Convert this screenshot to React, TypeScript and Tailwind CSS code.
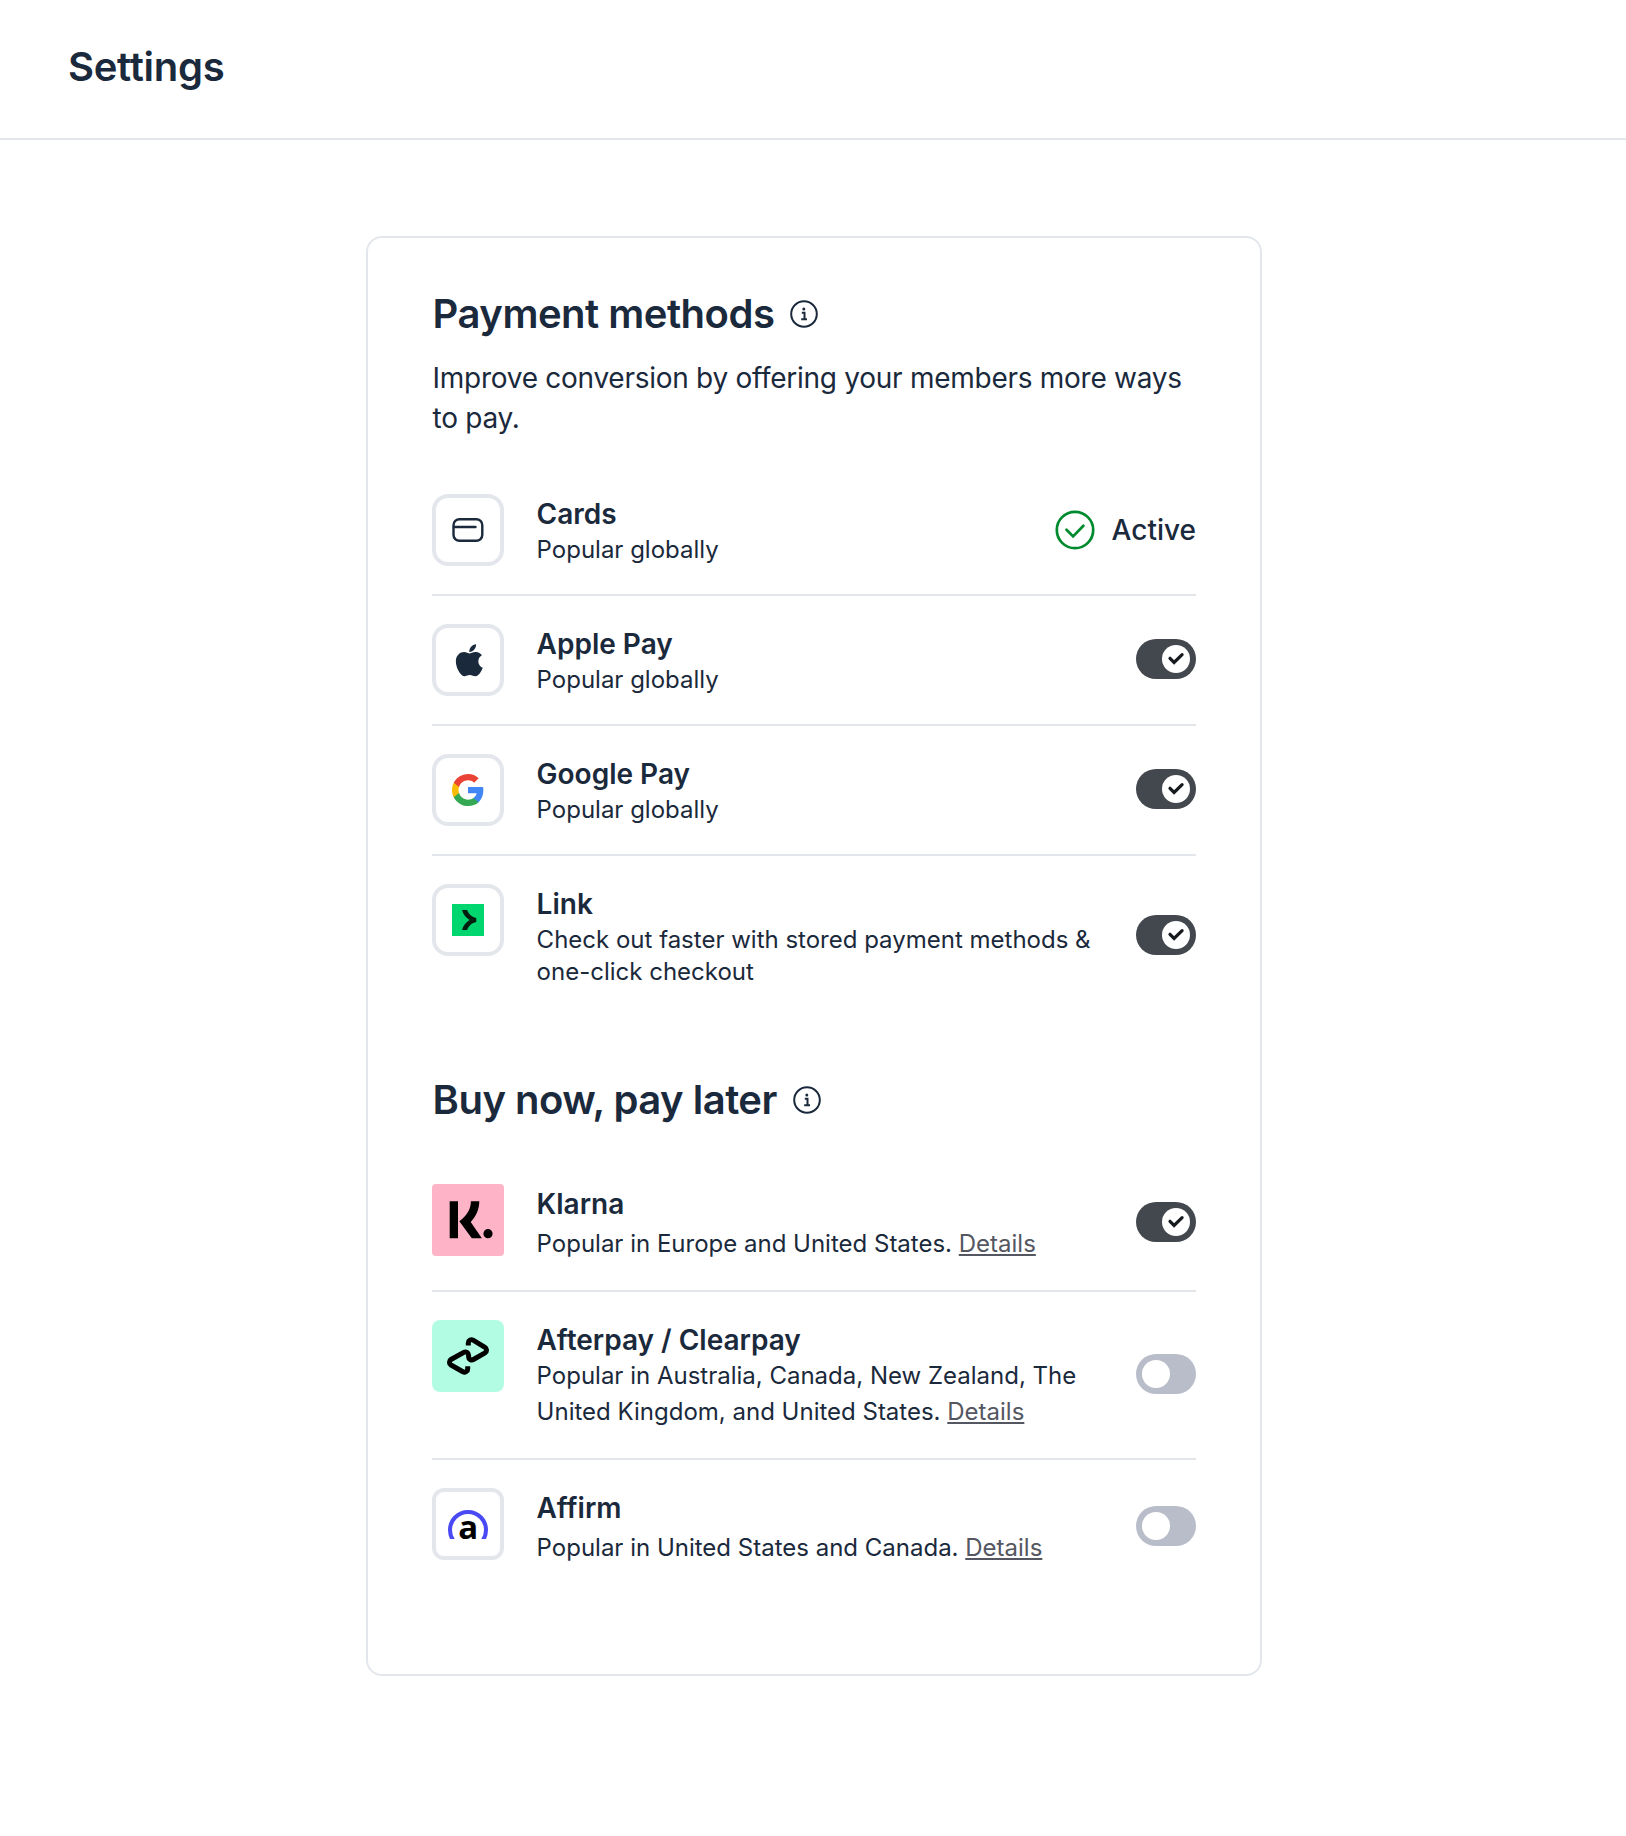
import { clsx } from "clsx";
import { ReactNode, useState } from "react";
import { FaApple } from "react-icons/fa";

type MethodRowProps = {
  icon: ReactNode;
  title: string;
  description: string;
  details?: boolean;
  enabled?: boolean;
  locked?: boolean;
};

function InfoIcon() {
  return (
    <svg viewBox="0 0 28 28" fill="none" stroke="currentColor" strokeWidth="2" className="size-7">
      <circle cx="14" cy="14" r="12.8" />
      <circle cx="13.8" cy="9" r="1.5" fill="currentColor" stroke="none" />
      <path d="M11.8 12.7h2.7v6.6M11.2 19.2h5.8" />
    </svg>
  );
}

function CardIcon() {
  return (
    <svg viewBox="0 0 32 32" fill="none" stroke="currentColor" strokeWidth="2.4" className="size-8">
      <rect x="1.5" y="5.2" width="28.8" height="21.6" rx="6" />
      <path d="M2 13h21.5" strokeLinecap="round" />
    </svg>
  );
}

function GoogleIcon() {
  return (
    <svg viewBox="1 1 22 22" className="size-8">
      <path
        fill="#4285F4"
        d="M22.56 12.25c0-.78-.07-1.53-.2-2.25H12v4.26h5.92c-.26 1.37-1.04 2.53-2.21 3.31v2.77h3.57c2.08-1.92 3.28-4.74 3.28-8.09z"
      />
      <path
        fill="#34A853"
        d="M12 23c2.97 0 5.46-.98 7.28-2.66l-3.57-2.77c-.98.66-2.23 1.06-3.71 1.06-2.86 0-5.29-1.93-6.16-4.53H2.18v2.84C3.99 20.53 7.7 23 12 23z"
      />
      <path
        fill="#FBBC05"
        d="M5.84 14.09c-.22-.66-.35-1.36-.35-2.09s.13-1.43.35-2.09V7.07H2.18C1.43 8.55 1 10.22 1 12s.43 3.45 1.18 4.93l3.66-2.84z"
      />
      <path
        fill="#EA4335"
        d="M12 5.38c1.62 0 3.06.56 4.21 1.64l3.15-3.15C17.45 2.09 14.97 1 12 1 7.7 1 3.99 3.47 2.18 7.07l3.66 2.84c.87-2.6 3.3-4.53 6.16-4.53z"
      />
    </svg>
  );
}

function LinkIcon() {
  return (
    <svg viewBox="0 0 32 32" className="size-8">
      <path fill="#00D66F" d="M0 0h32v32H0z" />
      <path
        fill="#011E0F"
        d="M15.144 6H10c1 4.18 3.923 7.753 7.58 10C13.917 18.246 11 21.82 10 26h5.144c1.275-3.867 4.805-7.227 9.142-7.914v-4.18c-4.344-.682-7.874-4.043-9.142-7.906z"
      />
    </svg>
  );
}

function KlarnaIcon() {
  return (
    <svg viewBox="0 0 72 72" className="size-[72px] shrink-0 rounded bg-[#FFB3C7]">
      <path d="M17.7 17.3H26v36.9h-8.3z" />
      <path d="M38.9 17.3h8.4c0 8-3.2 15.2-8.6 20.6l11.2 16.3H39.8L27.3 37.2c7.3-5 11.6-12 11.6-19.9z" />
      <circle cx="56" cy="49.7" r="4.6" />
    </svg>
  );
}

function AfterpayIcon() {
  return (
    <svg
      viewBox="0 0 72 72"
      fill="none"
      stroke="#000"
      strokeWidth="5"
      className="size-[72px] shrink-0 rounded-lg bg-[#B2FCE4]"
    >
      <path d="M36.3 25.5V23a3.2 3.2 0 0 1 4.8-2.8L53 27.3a3.2 3.2 0 0 1 0 5.5l-11.6 6.7a3.2 3.2 0 0 1-4.8-2.8v-1.5a3.2 3.2 0 0 0-4.8-2.8L19 39.5a3.2 3.2 0 0 0 0 5.5l11.9 6.7a3.2 3.2 0 0 0 4.8-2.8v-2.6" />
    </svg>
  );
}

function AffirmIcon() {
  return (
    <svg viewBox="0 0 64 64" className="size-16">
      <clipPath id="affirm-clip">
        <path d="M0 0h64v47H0z" />
      </clipPath>
      <g clipPath="url(#affirm-clip)">
        <circle cx="32" cy="38" r="18" fill="none" stroke="#4A4AF4" strokeWidth="4" />
        <text
          x="32.2"
          y="47"
          fontSize="33"
          fontWeight="700"
          textAnchor="middle"
          className="font-['Open_Sans',sans-serif]"
          fill="#000"
        >
          a
        </text>
      </g>
    </svg>
  );
}

function IconBox({ small, children }: { small?: boolean; children: ReactNode }) {
  return (
    <div
      className={clsx(
        "flex size-[72px] shrink-0 items-center justify-center border-4 border-[#E3E7EC]",
        small ? "rounded-xl" : "rounded-2xl",
      )}
    >
      {children}
    </div>
  );
}

function Toggle({ label, initial }: { label: string; initial: boolean }) {
  const [on, setOn] = useState(initial);

  return (
    <button
      type="button"
      role="switch"
      aria-checked={on}
      aria-label={label}
      onClick={() => setOn(!on)}
      className={clsx(
        "mb-0.5 flex h-10 w-[60px] shrink-0 items-center rounded-full px-1.5",
        on ? "justify-end bg-[#43474E]" : "justify-start bg-[#B9BDCA]",
      )}
    >
      <span className="size-7 rounded-full bg-white">
        {on && (
          <svg viewBox="0 0 28 28" fill="none" stroke="#16191D" strokeWidth="3.2" className="size-7">
            <path d="M8 13.3l4.1 4.1 8-7.8" strokeLinecap="round" />
          </svg>
        )}
      </span>
    </button>
  );
}

function ActiveBadge() {
  return (
    <div className="flex items-center gap-[17px]">
      <svg viewBox="0 0 40 40" fill="none" stroke="#008A2E" strokeWidth="2.7" className="size-10">
        <circle cx="20" cy="20" r="18.2" />
        <path d="M11.5 19.8l6.6 6.6 10.3-10.6" strokeLinecap="round" />
      </svg>
      <span className="text-[28px] leading-10 font-medium">Active</span>
    </div>
  );
}

function MethodRow({ icon, title, description, details, enabled = false, locked }: MethodRowProps) {
  return (
    <li className="flex border-b-2 border-[#E3E7EC] py-7 last:border-b-0">
      {icon}
      <div className="ml-8 flex flex-1 items-center justify-between">
        <div className="max-w-[570px] pl-[0.6px]">
          <h3 className="text-[28px] leading-10 font-semibold">{title}</h3>
          <p className="text-2xl leading-8">
            {description}
            {details && (
              <>
                {" "}
                <a
                  href="#"
                  className="inline-block pt-1 pb-0.5 text-[#545761] underline decoration-2 underline-offset-2"
                >
                  Details
                </a>
              </>
            )}
          </p>
        </div>
        {locked ? <ActiveBadge /> : <Toggle label={title} initial={enabled} />}
      </div>
    </li>
  );
}

function SectionTitle({ children }: { children: ReactNode }) {
  return (
    <div className="flex items-center gap-4 pl-[0.6px]">
      <h2 className="text-[40px] leading-12 font-semibold tracking-[-0.5px]">{children}</h2>
      <InfoIcon />
    </div>
  );
}

export default function App() {
  return (
    <div className="min-h-screen bg-white font-['Inter',sans-serif] text-[#1A293B]">
      <header className="flex h-[140px] items-start border-b-2 border-[#E3E7EC] px-17 pt-[43px]">
        <h1 className="text-[40px] leading-12 font-semibold tracking-[-0.28px]">Settings</h1>
      </header>

      <main className="mt-24 ml-[366px] h-[1440px] w-[896px] rounded-2xl border-2 border-[#E3E7EC] px-16 pt-[52px]">
        <section>
          <SectionTitle>Payment methods</SectionTitle>
          <p className="mt-5 pl-[0.6px] text-[28px] leading-10 tracking-[-0.27px]">
            Improve conversion by offering your members more ways to pay.
          </p>
          <ul className="mt-7">
            <MethodRow
              icon={<IconBox><CardIcon /></IconBox>}
              title="Cards"
              description="Popular globally"
              locked
            />
            <MethodRow
              icon={<IconBox><FaApple className="ml-0.5 h-[36.6px] w-auto" /></IconBox>}
              title="Apple Pay"
              description="Popular globally"
              enabled
            />
            <MethodRow
              icon={<IconBox><GoogleIcon /></IconBox>}
              title="Google Pay"
              description="Popular globally"
              enabled
            />
            <MethodRow
              icon={<IconBox><LinkIcon /></IconBox>}
              title="Link"
              description="Check out faster with stored payment methods & one-click checkout"
              enabled
            />
          </ul>
        </section>

        <section className="mt-[60px]">
          <SectionTitle>Buy now, pay later</SectionTitle>
          <ul className="mt-8">
            <MethodRow
              icon={<KlarnaIcon />}
              title="Klarna"
              description="Popular in Europe and United States."
              details
              enabled
            />
            <MethodRow
              icon={<AfterpayIcon />}
              title="Afterpay / Clearpay"
              description="Popular in Australia, Canada, New Zealand, The United Kingdom, and United States."
              details
            />
            <MethodRow
              icon={<IconBox small><AffirmIcon /></IconBox>}
              title="Affirm"
              description="Popular in United States and Canada."
              details
            />
          </ul>
        </section>
      </main>
    </div>
  );
}
